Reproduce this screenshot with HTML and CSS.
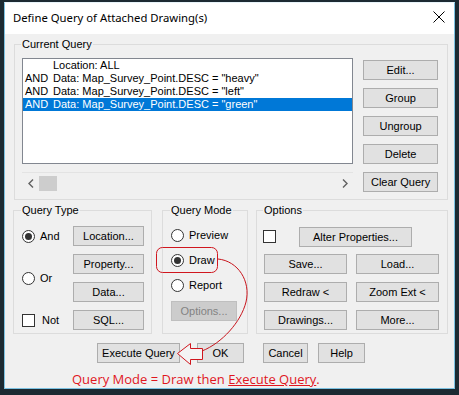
FILE: index.html
```html
<!DOCTYPE html>
<html lang="en">
<head>
    <meta charset="UTF-8">
    <title>Define Query of Attached Drawing(s)</title>
    <link rel="stylesheet" href="styles.css">
</head>
<body>
    <div class="window">
        <div class="titlebar">
            <span class="title">Define Query of Attached Drawing(s)</span>
            <svg class="close" viewBox="0 0 12 12" width="12" height="12">
                <path d="M0.5 0.5L11.5 11.5M11.5 0.5L0.5 11.5" stroke="#000" stroke-width="1" fill="none"/>
            </svg>
        </div>

        <div class="content">
            <fieldset class="group current">
                <legend>Current Query</legend>
                <div class="current-grid">
                    <div class="list-col">
                        <div class="list">
                            <div class="row"><span class="op"></span><span>Location: ALL</span></div>
                            <div class="row"><span class="op">AND</span><span>Data: Map_Survey_Point.DESC = "heavy"</span></div>
                            <div class="row"><span class="op">AND</span><span>Data: Map_Survey_Point.DESC = "left"</span></div>
                            <div class="row selected"><span class="op">AND</span><span>Data: Map_Survey_Point.DESC = "green"</span></div>
                        </div>
                        <div class="hscroll">
                            <span class="scroll-btn">
                                <svg viewBox="0 0 6 9" width="6" height="9"><path d="M5 0.5L1 4.5L5 8.5" stroke="#606060" stroke-width="1.4" fill="none"/></svg>
                            </span>
                            <span class="thumb"></span>
                            <span class="scroll-btn">
                                <svg viewBox="0 0 6 9" width="6" height="9"><path d="M1 0.5L5 4.5L1 8.5" stroke="#606060" stroke-width="1.4" fill="none"/></svg>
                            </span>
                        </div>
                    </div>
                    <div class="side-buttons">
                        <button>Edit...</button>
                        <button>Group</button>
                        <button>Ungroup</button>
                        <button>Delete</button>
                        <button>Clear Query</button>
                    </div>
                </div>
            </fieldset>

            <div class="groups">
                <fieldset class="group qtype">
                    <legend>Query Type</legend>
                    <div class="qtype-grid">
                        <label class="choice and"><span class="radio checked"></span>And</label>
                        <button>Location...</button>
                        <label class="choice or"><span class="radio"></span>Or</label>
                        <button class="b-property">Property...</button>
                        <button class="b-data">Data...</button>
                        <label class="choice not"><span class="check"></span>Not</label>
                        <button class="b-sql">SQL...</button>
                    </div>
                </fieldset>

                <fieldset class="group qmode">
                    <legend>Query Mode</legend>
                    <div class="qmode-list">
                        <label class="choice"><span class="radio"></span>Preview</label>
                        <label class="choice"><span class="radio checked"></span>Draw</label>
                        <label class="choice"><span class="radio"></span>Report</label>
                        <button class="disabled">Options...</button>
                    </div>
                </fieldset>

                <fieldset class="group options">
                    <legend>Options</legend>
                    <div class="options-grid">
                        <div class="alter-row">
                            <span class="check"></span>
                            <button class="b-alter">Alter Properties...</button>
                        </div>
                        <button>Save...</button>
                        <button>Load...</button>
                        <button>Redraw &lt;</button>
                        <button>Zoom Ext &lt;</button>
                        <button>Drawings...</button>
                        <button>More...</button>
                    </div>
                </fieldset>
            </div>

            <div class="footer">
                <button class="b-exec">Execute Query</button>
                <button class="b-ok">OK</button>
                <button class="b-cancel">Cancel</button>
                <button class="b-help">Help</button>
            </div>

            <p class="note">Query Mode = Draw then <u>Execute Query</u>.</p>
        </div>
    </div>

    <!-- red markup drawn over the dialog -->
    <svg class="markup" viewBox="0 0 459 395" width="459" height="395">
        <rect x="156.5" y="247.5" width="61" height="25" rx="6" ry="6" fill="none" stroke="#d0161e" stroke-width="1"/>
        <path d="M218 259C238 261 251 281 246 302C241 322 222 343 202 351" fill="none" stroke="#c8141c" stroke-width="1"/>
        <path d="M177.5 353.5L190.5 343.5V348.5H202.5V359.5H190.5V364.5Z" fill="#f4f4f4" stroke="#d0161e" stroke-width="1"/>
    </svg>
</body>
</html>
```

FILE: styles.css
```css
* {
    box-sizing: border-box;
    margin: 0;
    padding: 0;
}

body {
    position: relative;
    width: 459px;
    height: 395px;
    padding: 2px 0 0 4px;
    background: #1c2a32;
    font-family: 'Liberation Sans', Arial, sans-serif;
    font-size: 11px;
    color: #000;
    overflow: hidden;
}

.window {
    width: 451px;
    height: 387px;
    border: 1px solid #7cc2e2;
    border-top-color: #e8f4fa;
    background: #f0f0f0;
}

.titlebar {
    height: 31px;
    background: #fff;
    display: flex;
    align-items: center;
    justify-content: space-between;
    padding: 0 9px 0 8px;
}

.title {
    font-family: 'Noto Sans', 'Open Sans', sans-serif;
    font-size: 11.3px;
    color: #000;
    margin-top: -2px;
}

.close {
    margin-top: -4px;
}

/* group boxes */

.group {
    border: 1px solid #dcdcdc;
    min-width: 0;
}

.group legend {
    line-height: 13px;
    padding: 0 1px;
    margin-left: -1px;
}

.current {
    width: 434px;
    margin: 4px 0 0 9px;
    padding: 7px 9px 6px 7px;
}

.current-grid {
    display: flex;
    gap: 10px;
}

.list-col {
    width: 332px;
}

.list {
    height: 106px;
    border: 1px solid #828790;
    background: #fff;
}

.row {
    display: flex;
    height: 13px;
    line-height: 13px;
    padding-left: 2px;
    white-space: nowrap;
}

.row .op {
    width: 28px;
}

.row.selected {
    background: #0078d7;
    color: #fff;
}

.hscroll {
    margin-top: 8px;
    height: 21px;
    border-top: 1px solid #e3e3e3;
    display: flex;
    align-items: center;
}

.scroll-btn {
    width: 17px;
    display: flex;
    justify-content: center;
}

.thumb {
    width: 18px;
    height: 15px;
    background: #cdcdcd;
    margin-right: auto;
}

.side-buttons {
    width: 75px;
    padding-top: 2px;
    display: flex;
    flex-direction: column;
    gap: 8px;
}

button {
    height: 20px;
    background: #e1e1e1;
    border: 1px solid #adadad;
    font-family: 'Liberation Sans', Arial, sans-serif;
    font-size: 11px;
    color: #000;
    white-space: nowrap;
}

button.disabled {
    background: #cccccc;
    border-color: #bfbfbf;
    color: #838383;
}

/* radios and checks */

.choice {
    display: flex;
    align-items: center;
    gap: 5px;
    white-space: nowrap;
}

.radio {
    width: 13px;
    height: 13px;
    border: 1px solid #333;
    border-radius: 50%;
    background: #fff;
    display: flex;
    align-items: center;
    justify-content: center;
}

.radio.checked::after {
    content: "";
    width: 7px;
    height: 7px;
    border-radius: 50%;
    background: #333;
}

.check {
    width: 13px;
    height: 13px;
    border: 1px solid #333;
    background: #fff;
}

.choice.not {
    gap: 7px;
}

/* bottom row of groups */

.groups {
    display: flex;
    margin-top: 4px;
}

.qtype {
    width: 139px;
    margin-left: 8px;
    padding: 9px 7px 3px 8px;
}

.qtype-grid {
    display: grid;
    grid-template-columns: 1fr 71px;
    grid-template-rows: repeat(4, 20px);
    row-gap: 8px;
}

.qtype-grid .or {
    grid-column: 1;
    grid-row: 2 / 4;
}

.qtype-grid .b-property {
    grid-column: 2;
    grid-row: 2;
}

.qtype-grid .b-data {
    grid-column: 2;
    grid-row: 3;
}

.qtype-grid .not {
    grid-row: 4;
}

.qtype-grid .b-sql {
    grid-column: 2;
    grid-row: 4;
}

.qmode {
    width: 86px;
    margin-left: 10px;
    padding: 9px 10px 3px 8px;
}

.qmode-list {
    display: grid;
    grid-template-rows: 18px 18px 18px 20px;
    row-gap: 7px;
}

.qmode-list button {
    width: 66px;
}

.options {
    width: 192px;
    margin-left: 8px;
    padding: 9px 8px 3px 7px;
}

.options-grid {
    display: grid;
    grid-template-columns: 83px 83px;
    grid-template-rows: repeat(4, 20px);
    column-gap: 9px;
    row-gap: 8px;
}

.alter-row {
    grid-column: 1 / -1;
    display: flex;
    align-items: center;
    gap: 23px;
    margin-left: -1px;
    padding-top: 1px;
}

.b-alter {
    width: 113px;
}

/* dialog buttons */

.footer {
    display: flex;
    gap: 10px;
    margin-top: 9px;
    padding-left: 92px;
}

.b-exec {
    width: 83px;
}

.b-ok {
    width: 47px;
    margin: 0 9px 0 7px;
}

.b-cancel {
    width: 45px;
}

.b-help {
    width: 47px;
}

.note {
    margin-top: 8px;
    padding-left: 67px;
    font-family: 'Open Sans', 'Noto Sans', sans-serif;
    font-size: 13px;
    line-height: 16px;
    color: #e0161e;
}

.markup {
    position: absolute;
    left: 0;
    top: 0;
    pointer-events: none;
}
```
